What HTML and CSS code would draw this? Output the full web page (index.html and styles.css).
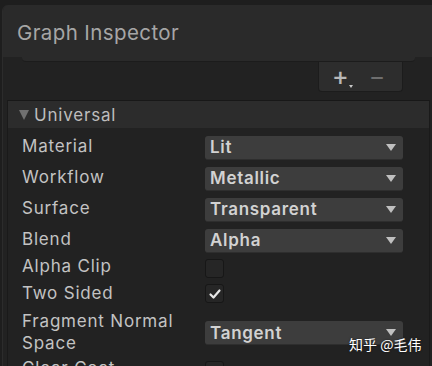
FILE: index.html
```html
<!DOCTYPE html>
<html>
<head>
<meta charset="utf-8">
<link rel="stylesheet" href="styles.css">
</head>
<body>
<div class="window">
  <div class="header"><span class="title">Graph Inspector</span></div>
  <div class="listbox"></div>
  <div class="btnrow">
    <div class="btns">
      <span class="plus">+<span class="caret"></span></span>
      <span class="minus">−</span>
    </div>
  </div>
  <div class="content">
    <div class="foldout"><span class="tri"></span><span class="foldtext">Universal</span></div>
    <div class="props">
      <div class="row r-dd"><span class="label">Material</span><div class="dd"><span class="ddtext">Lit</span><span class="arrow"></span></div></div>
      <div class="row r-dd"><span class="label">Workflow</span><div class="dd"><span class="ddtext">Metallic</span><span class="arrow"></span></div></div>
      <div class="row r-dd"><span class="label">Surface</span><div class="dd"><span class="ddtext">Transparent</span><span class="arrow"></span></div></div>
      <div class="row r-dd"><span class="label">Blend</span><div class="dd"><span class="ddtext">Alpha</span><span class="arrow"></span></div></div>
      <div class="row r-cb1"><span class="label">Alpha Clip</span><div class="cb"></div></div>
      <div class="row r-cb2"><span class="label">Two Sided</span><div class="cb"><svg class="check" viewBox="0 0 14 14" width="14" height="14"><path d="M2.5 7.5 L5.5 10.5 L11.5 3.5" fill="none" stroke="#e6e6e6" stroke-width="2.2" stroke-linecap="round" stroke-linejoin="round"/></svg></div></div>
      <div class="row r-fns"><span class="label two">Fragment Normal<br>Space</span><div class="dd"><span class="ddtext">Tangent</span><span class="arrow"></span></div></div>
      <div class="row r-cc"><span class="label">Clear Coat</span><div class="cb"></div></div>
    </div>
  </div>
  <div class="watermark">知乎 @毛伟</div>
</div>
</body>
</html>
```

FILE: styles.css
```css
html, body {
  margin: 0;
  padding: 0;
  background: #1e1e1e;
  overflow: hidden;
  height: 366px;
}
body {
  font-family: Inter, "Noto Sans", "Noto Sans CJK SC", sans-serif;
}
.window {
  position: relative;
  margin: 5px 0 0 2px;
  height: 361px;
  background: #222222;
  border-top-left-radius: 6px;
  border-left: 1px solid #2c2c2c;
  overflow: hidden;
}
.header {
  height: 52px;
  background: #2a2a2a;
  display: flex;
  align-items: center;
  padding-left: 14px;
  box-sizing: border-box;
  padding-top: 2px;
}
.title {
  font-size: 20.5px;
  color: #a6a6a6;
  letter-spacing: 0.4px;
}
.listbox {
  margin-left: 19px;
  width: 393px;
  height: 5px;
  background: #2a2a2a;
  border-bottom: 1px solid #1c1c1c;
  border-radius: 0 0 4px 4px;
  box-sizing: border-box;
}
.btnrow {
  display: flex;
  justify-content: flex-end;
  padding-right: 29px;
  height: 38px;
}
.btns {
  width: 85px;
  height: 30px;
  background: #2d2d2d;
  border-radius: 0 0 4px 4px;
  border: 1px solid #1c1c1c;
  border-top: none;
  box-sizing: border-box;
  display: flex;
  align-items: center;
  color: #b8b8b8;
  font-size: 25px;
  padding-left: 13px;
  gap: 20px;
}
.plus {
  position: relative;
  font-weight: 500;
  line-height: 1;
}
.caret {
  position: absolute;
  right: -4px;
  bottom: 1px;
  width: 0;
  height: 0;
  border-left: 2.5px solid transparent;
  border-right: 2.5px solid transparent;
  border-top: 3px solid #c8c8c8;
}
.minus {
  color: #6e6e6e;
  line-height: 1;
}
.content {
  margin-left: 4px;
  width: 421px;
  border-top: 1px solid #181818;
  border-left: 1px solid #1a1a1a;
  border-right: 1px solid #1a1a1a;
  height: 300px;
}
.foldout {
  height: 27px;
  background: #2c2c2c;
  display: flex;
  align-items: center;
  padding-left: 11px;
  box-sizing: border-box;
}
.tri {
  width: 0;
  height: 0;
  border-left: 5.5px solid transparent;
  border-right: 5.5px solid transparent;
  border-top: 10px solid #707070;
  margin-right: 5px;
}
.foldtext {
  font-size: 17px;
  color: #bdbdbd;
  letter-spacing: 0.8px;
}
.props {
  padding: 4px 0 0 14px;
}
.row {
  display: grid;
  grid-template-columns: 183px 198px;
  align-items: center;
}
.r-dd { height: 31px; }
.r-cb1 { height: 23px; }
.r-cb2 { height: 29px; }
.r-fns { height: 50px; }
.r-cc { height: 24px; align-items: start; }
.label {
  font-size: 17px;
  color: #c3c3c3;
  letter-spacing: 0.8px;
  padding-bottom: 4px;
  white-space: nowrap;
}
.r-cb2 .label { padding-bottom: 1px; }
.label.two {
  line-height: 22px;
  padding-bottom: 2px;
}
.dd {
  height: 24px;
  background: #3d3d3d;
  border-radius: 3px;
  border-bottom: 1px solid #2e2e2e;
  box-sizing: border-box;
  display: flex;
  align-items: center;
  justify-content: space-between;
  padding: 0 7px 0 5px;
}
.ddtext {
  font-size: 17px;
  font-weight: 600;
  color: #d2d2d2;
  letter-spacing: 0.7px;
}
.arrow {
  width: 0;
  height: 0;
  border-left: 5.5px solid transparent;
  border-right: 5.5px solid transparent;
  border-top: 7px solid #c0c0c0;
}
.cb {
  width: 19px;
  height: 19px;
  box-sizing: border-box;
  background: #262626;
  border: 1px solid #171717;
  border-radius: 3px;
  display: flex;
  align-items: center;
  justify-content: center;
}
.r-cc .cb { margin-top: 3px; }
.check { display: block; }
.watermark {
  position: absolute;
  left: 346px;
  top: 329px;
  white-space: nowrap;
  font-family: "Noto Sans CJK SC", sans-serif;
  font-size: 14px;
  color: #ffffff;
  text-shadow: 0 0 2px rgba(0,0,0,0.6);
}
```
